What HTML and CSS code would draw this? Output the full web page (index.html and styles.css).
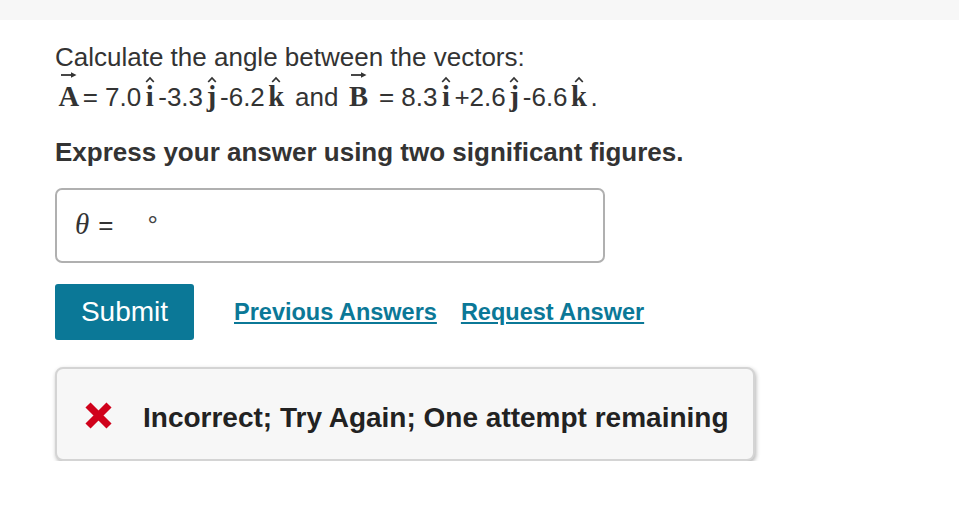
FILE: index.html
```html
<!DOCTYPE html>
<html lang="en">
<head>
<meta charset="utf-8">
<title>Vector angle</title>
<link rel="stylesheet" href="styles.css">
</head>
<body>
<div class="topbar"></div>
<main class="content">
  <div class="question">
    <div class="q-line">Calculate the angle between the vectors:</div>
    <div class="q-math"><span class="vec"><span class="acc"><svg width="17" height="11" viewBox="0 0 17 11"><path d="M1 3H12" stroke="#333" stroke-width="1.8"/><path d="M11 0.2L16.5 3L11 5.8Z" fill="#333"/></svg></span><span class="sym">A</span></span>= 7.0<span class="vec"><span class="acc"><svg width="10" height="11" viewBox="0 0 10 11"><polyline points="1.2,10 5,6 8.8,10" fill="none" stroke="#333" stroke-width="1.8"/></svg></span><span class="sym">i</span></span>-3.3<span class="vec"><span class="acc"><svg width="10" height="11" viewBox="0 0 10 11"><polyline points="1.2,10 5,6 8.8,10" fill="none" stroke="#333" stroke-width="1.8"/></svg></span><span class="sym">j</span></span>-6.2<span class="vec"><span class="acc"><svg width="10" height="11" viewBox="0 0 10 11"><polyline points="1.2,10 5,6 8.8,10" fill="none" stroke="#333" stroke-width="1.8"/></svg></span><span class="sym">k</span></span> and <span class="vec"><span class="acc"><svg width="17" height="11" viewBox="0 0 17 11"><path d="M1 3H12" stroke="#333" stroke-width="1.8"/><path d="M11 0.2L16.5 3L11 5.8Z" fill="#333"/></svg></span><span class="sym">B</span></span> = 8.3<span class="vec"><span class="acc"><svg width="10" height="11" viewBox="0 0 10 11"><polyline points="1.2,10 5,6 8.8,10" fill="none" stroke="#333" stroke-width="1.8"/></svg></span><span class="sym">i</span></span>+2.6<span class="vec"><span class="acc"><svg width="10" height="11" viewBox="0 0 10 11"><polyline points="1.2,10 5,6 8.8,10" fill="none" stroke="#333" stroke-width="1.8"/></svg></span><span class="sym">j</span></span>-6.6<span class="vec"><span class="acc"><svg width="10" height="11" viewBox="0 0 10 11"><polyline points="1.2,10 5,6 8.8,10" fill="none" stroke="#333" stroke-width="1.8"/></svg></span><span class="sym">k</span></span>.</div>
  </div>
  <p class="instruction">Express your answer using two significant figures.</p>
  <div class="answer-box">
    <span class="theta">θ</span><span class="eq">=</span><span class="field"></span><span class="deg">°</span>
  </div>
  <div class="actions">
    <button class="submit" type="button">Submit</button>
    <a class="link" href="#">Previous Answers</a>
    <a class="link" href="#">Request Answer</a>
  </div>
  <div class="feedback">
    <svg class="x-icon" width="27" height="27" viewBox="0 0 27 27"><path d="M3 3L24 24M24 3L3 24" stroke="#d0021b" stroke-width="7.2"/></svg>
    <span class="feedback-text">Incorrect; Try Again; One attempt remaining</span>
  </div>
</main>
</body>
</html>
```
FILE: styles.css
```css
html, body {
  margin: 0;
  padding: 0;
  background: #ffffff;
}
body {
  font-family: "Liberation Sans", Arial, Helvetica, sans-serif;
  color: #333333;
}
.topbar {
  height: 20px;
  background: #f7f7f7;
}
.content {
  padding-left: 55px;
}
.question {
  margin-top: 22px;
  font-size: 26px;
  line-height: 30px;
}
.q-line {
  white-space: nowrap;
}
.q-math {
  white-space: nowrap;
}
.vec {
  display: inline-block;
  line-height: 1;
  text-align: center;
  vertical-align: baseline;
  margin: 0 3.5px;
}
.acc {
  display: flex;
  justify-content: center;
  height: 11px;
}
.acc svg {
  display: block;
  flex: none;
}
.sym {
  display: block;
  font-family: "Liberation Serif", "Times New Roman", serif;
  font-weight: bold;
  font-size: 28.6px;
}
.instruction {
  margin: 25px 0 0;
  font-size: 26px;
  line-height: 30px;
  font-weight: bold;
}
.answer-box {
  box-sizing: border-box;
  margin-top: 21px;
  width: 550px;
  height: 75px;
  border: 2px solid #b0b0b0;
  border-radius: 7px;
  padding: 19px 18px 0;
  display: flex;
  align-items: baseline;
  font-size: 26px;
  line-height: 30px;
}
.theta {
  font-family: "Liberation Serif", "Times New Roman", serif;
  font-style: italic;
  font-size: 29px;
}
.eq {
  margin-left: 9px;
}
.field {
  display: inline-block;
  width: 34px;
}
.deg {
  color: #444;
}
.actions {
  margin-top: 21px;
  display: flex;
  align-items: center;
}
.submit {
  width: 139px;
  height: 56px;
  border: none;
  border-radius: 3px;
  background: #0b7897;
  color: #ffffff;
  font-family: "Liberation Sans", Arial, Helvetica, sans-serif;
  font-size: 28px;
  padding: 0;
  margin-right: 40px;
}
.link {
  font-size: 23.5px;
  line-height: 30px;
  font-weight: bold;
  color: #0b7897;
  text-decoration: underline;
  text-underline-offset: 2px;
  margin-right: 24px;
}
.feedback {
  box-sizing: border-box;
  margin-top: 27px;
  width: 700px;
  height: 94px;
  background: #f7f7f7;
  border: 2px solid #d4d4d4;
  border-radius: 8px;
  box-shadow: 1px 2px 4px rgba(0, 0, 0, 0.3);
  display: flex;
  align-items: center;
  padding: 8px 28px 0;
}
.x-icon {
  flex: none;
  margin-bottom: 5px;
  margin-right: 31px;
}
.feedback-text {
  font-size: 28px;
  line-height: 34px;
  font-weight: bold;
  color: #222222;
  white-space: nowrap;
}
```
